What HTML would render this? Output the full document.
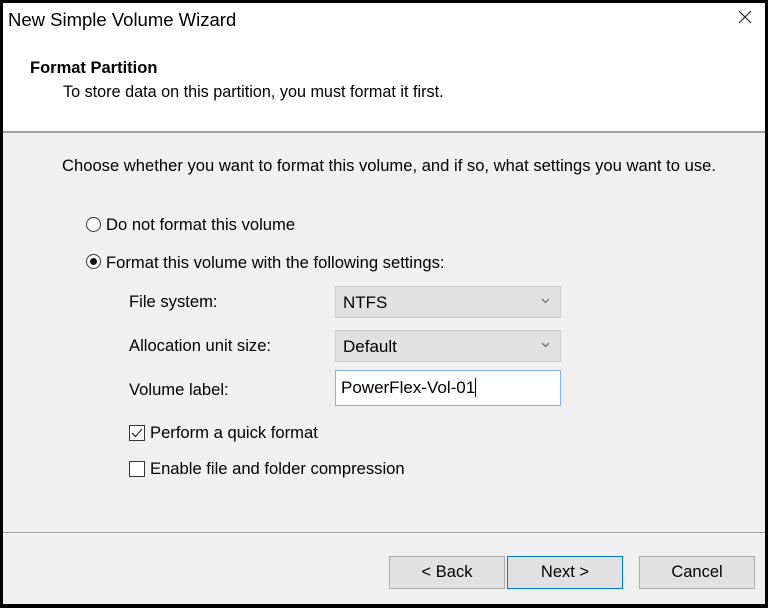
<!DOCTYPE html>
<html><head><style>
*{margin:0;padding:0;box-sizing:border-box}
body{width:768px;height:608px;background:#000;font-family:"Liberation Sans",sans-serif;color:#000;position:relative;overflow:hidden}
.win{position:absolute;left:3px;top:3px;width:762px;height:601px;background:#f0f0f0}
.hdr{position:absolute;left:0;top:0;width:762px;height:130px;background:#fff;border-bottom:2px solid #a0a0a0}
.a{position:absolute;white-space:nowrap;font-size:16.6px}
.sep{position:absolute;left:0;top:529px;width:762px;height:2px;background:#a0a0a0;border-bottom:1px solid #fff}
.dd{position:absolute;left:332px;width:226px;height:32px;background:#e1e1e1;border:1px solid #cdcdcd;font-size:17px;padding:6px 7px}
.dd svg{position:absolute;right:10px;top:11px}
.btn{position:absolute;top:553px;height:33px;background:#e1e1e1;border:1px solid #adadad;font-size:16.5px;text-align:center;line-height:31px}
.rad{position:absolute;width:15px;height:15px;border:1px solid #333;border-radius:50%;background:#fff}
.cb{position:absolute;width:16px;height:16px;border:1px solid #333;background:#fff}
</style></head><body>
<div class="win">
<div class="hdr">
<div class="a" style="left:5px;top:6px;font-size:18.5px">New Simple Volume Wizard</div>
<svg style="position:absolute;left:735px;top:7px" width="14" height="14"><path d="M1 1L13 13M13 1L1 13" stroke="#222" stroke-width="1.2"/></svg>
<div class="a" style="left:27px;top:56px;font-weight:bold;font-size:16.5px">Format Partition</div>
<div class="a" style="left:60px;top:80px;font-size:16.2px">To store data on this partition, you must format it first.</div>
</div>
<div class="a" style="left:59px;top:153px">Choose whether you want to format this volume, and if so, what settings you want to use.</div>
<div class="rad" style="left:83px;top:214px"></div>
<div class="a" style="left:103px;top:212px">Do not format this volume</div>
<div class="rad" style="left:83px;top:251px"><div style="position:absolute;left:3px;top:3px;width:7px;height:7px;border-radius:50%;background:#111"></div></div>
<div class="a" style="left:103px;top:250px">Format this volume with the following settings:</div>
<div class="a" style="left:126px;top:289px">File system:</div>
<div class="a" style="left:126px;top:333px">Allocation unit size:</div>
<div class="a" style="left:126px;top:377px">Volume label:</div>
<div class="dd" style="top:283px">NTFS<svg width="9" height="6"><path d="M1 1L4.5 4.5L8 1" stroke="#555" fill="none"/></svg></div>
<div class="dd" style="top:327px">Default<svg width="9" height="6"><path d="M1 1L4.5 4.5L8 1" stroke="#555" fill="none"/></svg></div>
<div style="position:absolute;left:332px;top:367px;width:226px;height:36px;background:#fff;border:1px solid #7eb4ea;font-size:17px;padding:7px 5px">PowerFlex-Vol-01<span style="display:inline-block;width:1px;height:19px;background:#000;vertical-align:-4px"></span></div>
<div class="cb" style="left:126px;top:422px"><svg width="14" height="14" style="position:absolute;left:0;top:0"><path d="M2 7L5.5 10.5L12 3" stroke="#333" stroke-width="1.3" fill="none"/></svg></div>
<div class="a" style="left:147px;top:420px">Perform a quick format</div>
<div class="cb" style="left:126px;top:458px"></div>
<div class="a" style="left:147px;top:456px">Enable file and folder compression</div>
<div class="sep"></div>
<div class="btn" style="left:386px;width:116px">&lt; Back</div>
<div class="btn" style="left:504px;width:116px;border-color:#0078d7">Next &gt;</div>
<div class="btn" style="left:636px;width:116px">Cancel</div>
</div>
</body></html>
